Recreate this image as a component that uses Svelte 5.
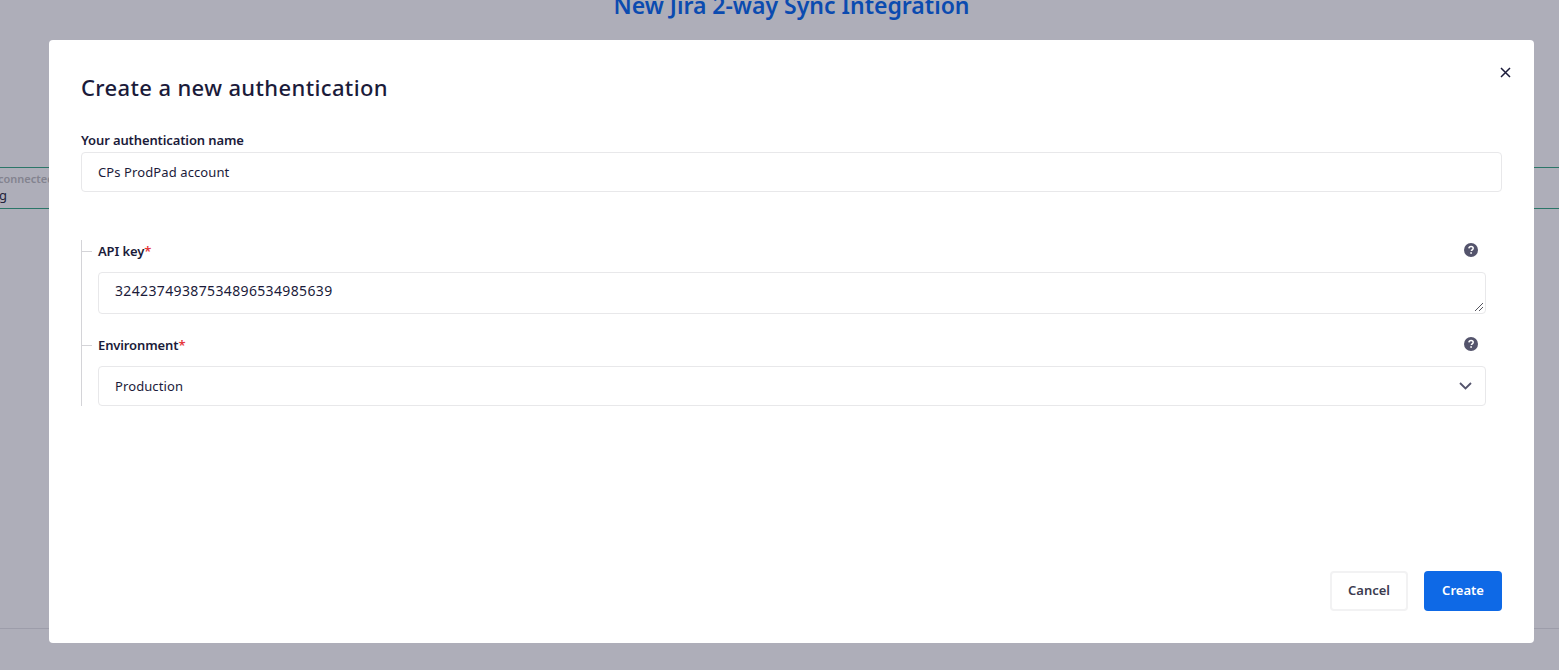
<script>
  const fields = [
    { label: 'API key', kind: 'area', value: '32423749387534896534985639' },
    { label: 'Environment', kind: 'select', value: 'Production' }
  ];
</script>

<div class="page">
  <div class="behind">
    <h2 class="bg-title">New Jira 2-way Sync Integration</h2>
    <div class="bg-row">
      <div class="bg-small">connected</div>
      <div class="bg-text">g</div>
    </div>
    <div class="bg-foot"></div>
  </div>

  <div class="modal">
    <button class="close" aria-label="Close">
      <svg width="11" height="11" viewBox="0 0 11 11"><path d="M1 1l9 9M10 1l-9 9" stroke="#1b1b3a" stroke-width="1.5" fill="none"/></svg>
    </button>
    <h1>Create a new authentication</h1>
    <div class="label">Your authentication name</div>
    <div class="input name">CPs ProdPad account</div>

    <div class="group">
      {#each fields as f}
        <div class="field">
          <div class="field-head">
            <span class="label inner">{f.label}<span class="req">*</span></span>
            <svg class="help" width="14" height="14" viewBox="0 0 14 14">
              <circle cx="7" cy="7" r="7" fill="#54546c"/>
              <path d="M4.9 5.4c.1-1.200 1-1.900 2.200-1.900 1.200 0 2.100.7 2.100 1.800 0 .9-.5 1.300-1.100 1.700-.5.3-.7.5-.7 1" stroke="#fff" stroke-width="1.500" fill="none"/>
              <rect x="6.300" y="9.200" width="1.600" height="1.600" fill="#fff"/>
            </svg>
          </div>
          {#if f.kind === 'area'}
            <div class="input area">
              {f.value}
              <svg class="grip" width="10" height="10" viewBox="0 0 10 10"><path d="M1 9l8-8M5 9l4-4" stroke="#55555f" stroke-width="1" fill="none"/></svg>
            </div>
          {:else}
            <div class="input select">
              {f.value}
              <svg width="13" height="8" viewBox="0 0 13 8"><path d="M1 1l5.500 5.500L12 1" stroke="#54546c" stroke-width="1.800" fill="none"/></svg>
            </div>
          {/if}
        </div>
      {/each}
    </div>

    <div class="actions">
      <button class="btn cancel">Cancel</button>
      <button class="btn create">Create</button>
    </div>
  </div>
</div>

<style>
  :global(body) { margin: 0; }
  .page {
    position: relative;
    height: 670px;
    overflow: hidden;
    background: #aeaeb9;
    font-family: "Noto Sans", "Open Sans", sans-serif;
    color: #1b1b3a;
  }
  .behind { display: flex; flex-direction: column; height: 100%; }
  .bg-title {
    margin: -10px 0 0;
    font-size: 23px;
    line-height: 30px;
    font-weight: 600;
    text-align: center;
    color: #0b4bb0;
    padding-left: 24px;
  }
  .bg-row {
    margin-top: 147px;
    border-top: 1px solid #2b7668;
    border-bottom: 1px solid #2b7668;
    padding-top: 4px;
    height: 36px;
  }
  .bg-small { font-size: 11px; font-weight: 600; line-height: 14px; color: #83838f; margin-left: -2px; }
  .bg-text { font-size: 13px; line-height: 20px; color: #22223a; margin-left: -1px; margin-top: -1px; }
  .bg-foot { margin-top: auto; height: 41px; border-top: 1px solid #9d9daa; }

  .modal {
    position: absolute;
    left: 49px;
    top: 40px;
    width: 1485px;
    height: 603px;
    box-sizing: border-box;
    background: #fff;
    border-radius: 4px;
    padding: 32px;
    display: flex;
    flex-direction: column;
  }
  h1 {
    margin: 0 0 2px;
    font-size: 22px;
    line-height: 30px;
    font-weight: 500;
    letter-spacing: 0.37px;
    color: #1b1b3a;
  }
  .close {
    position: absolute;
    right: 23px;
    top: 27px;
    width: 11px;
    height: 11px;
    padding: 0;
    border: 0;
    background: none;
    display: flex;
  }
  .label {
    font-size: 13px;
    line-height: 18px;
    font-weight: 600;
    letter-spacing: -0.12px;
    color: #1b1b3a;
    margin-top: 27px;
    margin-bottom: 3px;
  }
  .label.inner { margin: 0; }
  .req { color: #e5383b; }
  .input {
    box-sizing: border-box;
    border: 1px solid #e8e8ea;
    border-radius: 4px;
    padding: 0 16px;
    font-size: 13px;
    letter-spacing: 0.1px;
    color: #1b1b3a;
    display: flex;
    align-items: center;
    background: #fff;
    position: relative;
  }
  .name { height: 40px; }
  .group {
    margin-top: 48px;
    border-left: 1px solid #d4d4d8;
    padding-left: 16px;
    padding-right: 16px;
    display: flex;
    flex-direction: column;
    gap: 20px;
    height: 166px;
    box-sizing: border-box;
  }
  .field { position: relative; }
  .field-head {
    display: flex;
    justify-content: space-between;
    align-items: center;
    height: 18px;
    margin-top: 2px;
    margin-bottom: 12px;
    padding-right: 8px;
  }
  .field-head::before {
    content: "";
    position: absolute;
    left: -16px;
    top: 11px;
    width: 10px;
    height: 1px;
    background: #d4d4d8;
  }
  .help { margin-bottom: 2px; }
  .area { height: 42px; font-size: 14px; letter-spacing: 0.36px; padding-bottom: 5px; }
  .grip { position: absolute; right: 1px; bottom: 1px; }
  .select { height: 40px; justify-content: space-between; padding-right: 13px; }
  .actions {
    margin-top: auto;
    display: flex;
    justify-content: flex-end;
    gap: 16px;
  }
  .btn {
    width: 78px;
    height: 40px;
    border-radius: 4px;
    font-family: inherit;
    font-size: 13px;
    font-weight: 600;
    padding: 0 0 2px;
  }
  .cancel { background: #fff; border: 2px solid #f2f2f3; color: #3c3c50; }
  .create { background: #0e69e6; border: 0; color: #fff; }
</style>
